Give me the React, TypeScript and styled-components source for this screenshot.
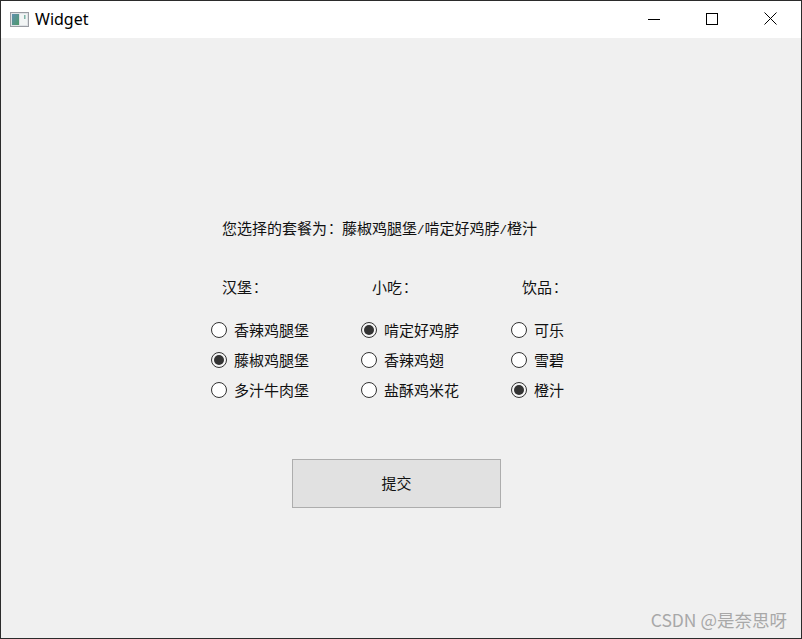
import * as React from "react";
import styled, { createGlobalStyle } from "styled-components";

const GlobalStyle = createGlobalStyle`
	html, body {
		margin: 0;
		padding: 0;
		background: #f0f0f0;
	}
`;

const StyledWindow = styled.div`
	position: relative;
	box-sizing: border-box;
	width: 802px;
	height: 639px;
	border: 1px solid #2b2b2b;
	background: #f0f0f0;
	font-family: "Noto Sans CJK SC", "Liberation Sans", sans-serif;
	color: #111;
	display: flex;
	flex-direction: column;
	overflow: hidden;
`;

const StyledTitleBar = styled.header`
	height: 37px;
	flex: none;
	background: #fff;
	display: flex;
	align-items: center;
	padding-left: 9px;
`;

const StyledTitle = styled.span`
	margin-left: 5px;
	padding-bottom: 2px;
	font-family: "Noto Sans", "Liberation Sans", Arial, sans-serif;
	font-size: 16px;
	color: #000;
	flex: 1;
`;

const StyledControls = styled.div`
	display: flex;
	height: 100%;
	margin-right: 1px;
`;

const StyledControl = styled.div`
	width: 58.5px;
	display: flex;
	align-items: center;
	justify-content: center;
	margin-top: -2px;
`;

const StyledContent = styled.main`
	display: flex;
	flex-direction: column;
	padding: 180px 0 0 210px;
`;

const StyledSummary = styled.div`
	font-size: 15px;
	line-height: 20px;
	padding-left: 11px;
	height: 20px;
	white-space: nowrap;
`;

const StyledColon = styled.span`
	font-size: 14px;
	line-height: 1;
	padding-left: 1px;
	vertical-align: 1px;
`;

const StyledSlash = styled.span`
	font-family: "Liberation Mono", monospace;
	font-size: 12.5px;
`;

const StyledColumns = styled.div`
	display: grid;
	grid-template-columns: repeat(3, 150px);
	margin-top: 39px;
`;

const StyledColumn = styled.section`
	display: flex;
	flex-direction: column;
`;

const StyledHeading = styled.div`
	font-size: 15px;
	line-height: 20px;
	height: 20px;
	padding-left: 11px;
	margin-bottom: 18px;
`;

const StyledOption = styled.label`
	display: flex;
	align-items: center;
	height: 30px;
	font-size: 15px;
	line-height: 20px;
	white-space: nowrap;
`;

const StyledOptionText = styled.span`
	padding-bottom: 1px;
`;

const StyledRadio = styled.span<{ $checked: boolean }>`
	box-sizing: border-box;
	width: 16px;
	height: 16px;
	border-radius: 50%;
	border: 1px solid #333;
	background: ${(p) => (p.$checked ? "#f5f5f5" : "#fff")};
	margin-right: 7px;
	display: flex;
	align-items: center;
	justify-content: center;

	&::after {
		content: "";
		display: ${(p) => (p.$checked ? "block" : "none")};
		width: 10px;
		height: 10px;
		border-radius: 50%;
		background: #333;
	}
`;

const StyledSubmitRow = styled.div`
	margin-top: 54px;
	padding-left: 81px;
`;

const StyledButton = styled.button`
	box-sizing: border-box;
	width: 209px;
	height: 49px;
	background: #e1e1e1;
	border: 1px solid #adadad;
	font-family: inherit;
	font-size: 15px;
	color: #111;
	padding: 0 0 2px;
`;

const StyledWatermark = styled.div`
	position: absolute;
	right: 14px;
	bottom: 7px;
	font-family: "Noto Sans CJK SC", "Liberation Sans", sans-serif;
	font-size: 17.5px;
	line-height: 22px;
	color: #a8a8a8;
`;

const MENU = [
	{
		title: "汉堡",
		items: [
			{ label: "香辣鸡腿堡", checked: false },
			{ label: "藤椒鸡腿堡", checked: true },
			{ label: "多汁牛肉堡", checked: false },
		],
	},
	{
		title: "小吃",
		items: [
			{ label: "啃定好鸡脖", checked: true },
			{ label: "香辣鸡翅", checked: false },
			{ label: "盐酥鸡米花", checked: false },
		],
	},
	{
		title: "饮品",
		items: [
			{ label: "可乐", checked: false },
			{ label: "雪碧", checked: false },
			{ label: "橙汁", checked: true },
		],
	},
];

const AppIcon = () => (
	<svg width="20" height="16" viewBox="0 0 20 16">
		<defs>
			<linearGradient id="pane" x1="0" y1="0" x2="1" y2="1">
				<stop offset="0" stopColor="#5f8fb0" />
				<stop offset="1" stopColor="#4f9a6a" />
			</linearGradient>
		</defs>
		<rect x="0.5" y="0.5" width="18" height="14" fill="#dfe3e6" stroke="#9a9da3" />
		<rect x="2" y="2" width="7" height="11" fill="url(#pane)" />
		<rect x="10" y="2" width="7" height="11" fill="#f2f5f5" />
		<rect x="14" y="3" width="1.5" height="4" fill="#7fb5a8" />
	</svg>
);

const App = () => (
	<StyledWindow>
		<GlobalStyle />
		<StyledTitleBar>
			<AppIcon />
			<StyledTitle>Widget</StyledTitle>
			<StyledControls>
				<StyledControl>
					<svg width="12" height="12" viewBox="0 0 12 12">
						<path d="M0 6.5H12" stroke="#000" strokeWidth="1" />
					</svg>
				</StyledControl>
				<StyledControl>
					<svg width="12" height="12" viewBox="0 0 12 12">
						<rect x="0.5" y="0.5" width="11" height="11" fill="none" stroke="#000" />
					</svg>
				</StyledControl>
				<StyledControl>
					<svg width="13" height="13" viewBox="0 0 13 13">
						<path d="M0.5 0.5L12.5 12.5M12.5 0.5L0.5 12.5" stroke="#000" strokeWidth="1" />
					</svg>
				</StyledControl>
			</StyledControls>
		</StyledTitleBar>
		<StyledContent>
			<StyledSummary>
				您选择的套餐为<StyledColon>：</StyledColon>藤椒鸡腿堡<StyledSlash>/</StyledSlash>啃定好鸡脖<StyledSlash>/</StyledSlash>橙汁
			</StyledSummary>
			<StyledColumns>
				{MENU.map((group) => (
					<StyledColumn key={group.title}>
						<StyledHeading>
							{group.title}
							<StyledColon>：</StyledColon>
						</StyledHeading>
						{group.items.map((item) => (
							<StyledOption key={item.label}>
								<StyledRadio $checked={item.checked} />
								<StyledOptionText>{item.label}</StyledOptionText>
							</StyledOption>
						))}
					</StyledColumn>
				))}
			</StyledColumns>
			<StyledSubmitRow>
				<StyledButton>提交</StyledButton>
			</StyledSubmitRow>
		</StyledContent>
		<StyledWatermark>CSDN @是奈思呀</StyledWatermark>
	</StyledWindow>
);

export default App;
